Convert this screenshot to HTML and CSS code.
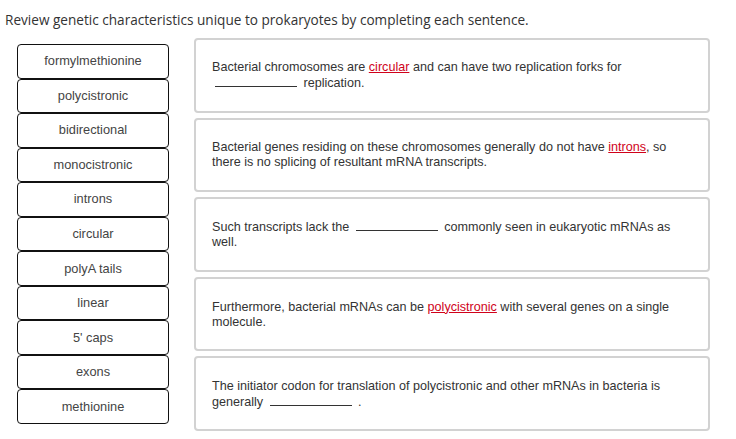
FILE: index.html
```html
<!DOCTYPE html>
<html>
<head>
<meta charset="utf-8">
<link rel="stylesheet" href="styles.css">
</head>
<body>
<p class="prompt">Review genetic characteristics unique to prokaryotes by completing each sentence.</p>
<div class="activity">
  <div class="bank">
    <div class="chip">formylmethionine</div>
    <div class="chip">polycistronic</div>
    <div class="chip">bidirectional</div>
    <div class="chip">monocistronic</div>
    <div class="chip">introns</div>
    <div class="chip">circular</div>
    <div class="chip">polyA tails</div>
    <div class="chip">linear</div>
    <div class="chip">5' caps</div>
    <div class="chip">exons</div>
    <div class="chip">methionine</div>
  </div>
  <div class="sentences">
    <div class="card"><p>Bacterial chromosomes are <span class="term">circular</span> and can have two replication forks for <span class="blank"></span> replication.</p></div>
    <div class="card"><p>Bacterial genes residing on these chromosomes generally do not have <span class="term">introns</span>, so there is no splicing of resultant mRNA transcripts.</p></div>
    <div class="card"><p>Such transcripts lack the <span class="blank"></span> commonly seen in eukaryotic mRNAs as well.</p></div>
    <div class="card"><p>Furthermore, bacterial mRNAs can be <span class="term">polycistronic</span> with several genes on a single molecule.</p></div>
    <div class="card"><p>The initiator codon for translation of polycistronic and other mRNAs in bacteria is generally <span class="blank"></span> .</p></div>
  </div>
</div>
</body>
</html>
```
FILE: styles.css
```css
html, body {
  margin: 0;
  padding: 0;
  background: #fff;
}
body {
  width: 736px;
  height: 439px;
  overflow: hidden;
  color: #333;
  font-family: "Liberation Sans", Arial, sans-serif;
}
.prompt {
  margin: 0;
  padding: 11px 0 0 5px;
  height: 27px;
  box-sizing: border-box;
  font-family: "Open Sans", "Liberation Sans", sans-serif;
  font-size: 13.6px;
  line-height: 17px;
  color: #333;
}
.activity {
  display: flex;
  align-items: flex-start;
  padding: 11px 0 0 17px;
}
.bank {
  display: flex;
  flex-direction: column;
  width: 152px;
  margin-top: 6px;
}
.chip {
  box-sizing: border-box;
  height: 34.55px;
  border: 1px solid #111;
  border-radius: 4px;
  background: #fff;
  display: flex;
  align-items: center;
  justify-content: center;
  font-size: 12.8px;
  color: #444;
  padding-bottom: 1px;
}
.sentences {
  display: flex;
  flex-direction: column;
  gap: 5px;
  margin-left: 25px;
  width: 516px;
}
.card {
  box-sizing: border-box;
  height: 74.6px;
  border: 2px solid #d2d2d2;
  border-radius: 4px;
  display: flex;
  align-items: center;
  padding: 1px 24px 0 16px;
}
.card p {
  margin: 0;
  font-size: 12.6px;
  line-height: 15px;
  color: #333;
}
.term {
  color: #d0021b;
  text-decoration: underline;
}
.blank {
  display: inline-block;
  width: 82px;
  height: 11px;
  margin: 0 3px;
  border-bottom: 1px solid #333;
  vertical-align: baseline;
}
```
